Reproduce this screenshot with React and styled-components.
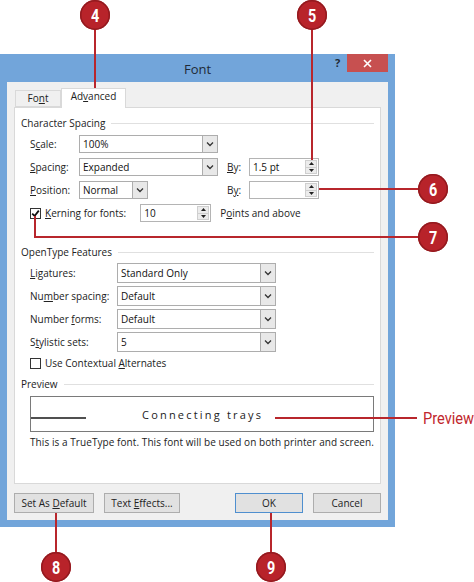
import { Fragment } from "react";
import styled, { createGlobalStyle } from "styled-components";

const GlobalStyle = createGlobalStyle`
  html, body {
    margin: 0;
    background: #fff;
  }
  body {
    font-family: "Open Sans", "Noto Sans", sans-serif;
    color: #1e1e1e;
  }
  * {
    box-sizing: border-box;
  }
`;

const Page = styled.div`
  position: relative;
  width: 474px;
  height: 582px;
  padding-top: 54px;
  overflow: hidden;
`;

const Window = styled.div`
  width: 395px;
  background: #72a5da;
  padding: 0 7px 7px;
`;

const TitleBar = styled.div`
  display: grid;
  grid-template-columns: 60px 1fr 60px;
  height: 28px;
`;

const Title = styled.div`
  grid-column: 2;
  align-self: center;
  text-align: center;
  font-size: 13px;
  color: #1f2a36;
  padding-top: 1px;
`;

const Controls = styled.div`
  grid-column: 3;
  display: flex;
  align-items: flex-start;
  justify-content: flex-end;
`;

const Help = styled.div`
  width: 19px;
  height: 18px;
  line-height: 18px;
  font-size: 11px;
  font-weight: 700;
  color: #1f2a36;
  text-align: center;
`;

const Close = styled.div`
  display: flex;
  align-items: center;
  justify-content: center;
  width: 41px;
  height: 18px;
  background: #c75050;
`;

const Body = styled.div`
  background: #f0f0f0;
  padding: 6px 7px 7px;
`;

const TabStrip = styled.div`
  display: flex;
  align-items: flex-end;
  height: 19px;
  padding-left: 1px;
`;

const Tab = styled.div`
  position: relative;
  height: ${(p) => (p.$active ? "20px" : "17px")};
  width: ${(p) => p.$width}px;
  margin-bottom: ${(p) => (p.$active ? "-1px" : "0")};
  border: 1px solid #d9d9d9;
  border-bottom: ${(p) => (p.$active ? "none" : "1px solid #d9d9d9")};
  background: ${(p) => (p.$active ? "#fff" : "#f0f0f0")};
  font-size: 10px;
  line-height: 15px;
  text-align: center;
  color: #222;
  z-index: ${(p) => (p.$active ? 1 : 0)};
`;

const TabPage = styled.div`
  height: 377px;
  border: 1px solid #d9d9d9;
  background: #fff;
  padding: 8px 6px 0;
`;

const Heading = styled.div`
  display: flex;
  align-items: center;
  gap: 6px;
  height: 14px;
  margin-top: ${(p) => p.$top || 0}px;
  font-size: 10px;
  color: #222;

  &::after {
    content: "";
    flex: 1;
    height: 1px;
    background: #e0e0e0;
  }
`;

const Group = styled.div`
  padding-left: 9px;
  margin-top: ${(p) => p.$top || 0}px;
`;

const SpacingGrid = styled.div`
  display: grid;
  grid-template-columns: 49px 148px 22px 70px;
  grid-auto-rows: 18px;
  row-gap: 5px;
  align-items: center;
`;

const FeatureGrid = styled.div`
  display: grid;
  grid-template-columns: 87px 159px;
  grid-auto-rows: 20px;
  row-gap: 3px;
  align-items: center;
`;

const Label = styled.div`
  font-size: 10px;
  color: #222;
  white-space: nowrap;
`;

const Key = styled.span`
  text-decoration: underline;
  text-underline-offset: 1px;
`;

const Combo = styled.div`
  display: flex;
  width: ${(p) => p.$width}px;
  height: 100%;
  border: 1px solid #adadad;
  background: #fff;
  justify-self: start;
`;

const ComboText = styled.div`
  flex: 1;
  padding-left: 3px;
  font-size: 10px;
  line-height: ${(p) => p.$line || 16}px;
  color: #111;
  white-space: nowrap;
`;

const DropButton = styled.div`
  display: flex;
  align-items: center;
  justify-content: center;
  width: 15px;
  border-left: 1px solid #adadad;
  background: #e8e8e8;
`;

const Spinner = styled.div`
  display: flex;
  width: ${(p) => p.$width}px;
  height: ${(p) => p.$height || 18}px;
  border: 1px solid #b4b4b4;
  background: #fff;
`;

const SpinText = styled.div`
  flex: 1;
  padding-left: 3px;
  font-size: 10px;
  line-height: 16px;
  color: #111;
`;

const SpinButtons = styled.div`
  display: flex;
  flex-direction: column;
  width: 12px;
  margin: 1px 1px 1px 0;
  background: #ececec;
  border: 1px solid #cfcfcf;
`;

const SpinHalf = styled.div`
  flex: 1;
  display: flex;
  align-items: center;
  justify-content: center;

  & + & {
    border-top: 1px solid #cfcfcf;
  }
`;

const CheckRow = styled.div`
  display: flex;
  align-items: center;
  height: ${(p) => p.$height || 14}px;
  margin-top: ${(p) => p.$top || 0}px;
`;

const Box = styled.div`
  display: flex;
  align-items: center;
  justify-content: center;
  width: 11px;
  height: 11px;
  margin-right: 4px;
  border: 1px solid #333;
  background: #fff;
`;

const Suffix = styled.div`
  margin-left: ${(p) => p.$gap}px;
  font-size: 10px;
  color: #222;
`;

const PreviewBox = styled.div`
  display: flex;
  align-items: center;
  height: 36px;
  margin-top: 5px;
  border: 1px solid #7a7a7a;
`;

const Rule = styled.div`
  width: 55px;
  height: 2px;
  margin-top: 8px;
  background: #505050;
`;

const Sample = styled.div`
  margin-left: 56px;
  font-size: 11px;
  letter-spacing: 2.2px;
  color: #222;
`;

const Note = styled.div`
  margin-top: 3px;
  font-size: 10px;
  line-height: 14px;
  letter-spacing: 0.07px;
  color: #222;
  white-space: nowrap;
`;

const Footer = styled.div`
  display: flex;
  gap: 10px;
  margin-top: 9px;
`;

const Button = styled.div`
  width: ${(p) => p.$width}px;
  height: 20px;
  margin-left: ${(p) => (p.$push ? "auto" : "0")};
  border: 1px solid ${(p) => (p.$primary ? "#4f8fcf" : "#adadad")};
  background: #e1e1e1;
  font-size: 10px;
  line-height: 18px;
  text-align: center;
  color: #222;
`;

const Leaders = styled.svg`
  position: absolute;
  inset: 0;
  pointer-events: none;
`;

const Badge = styled.div`
  position: absolute;
  left: ${(p) => p.$x - 15}px;
  top: ${(p) => p.$y - 15}px;
  display: flex;
  align-items: center;
  justify-content: center;
  width: 30px;
  height: 30px;
  border-radius: 50%;
  background: #b8232a;
  box-shadow: inset 0 0 0 1.5px #931a1f;
  color: #fff;
  font-family: Roboto, "Liberation Sans", sans-serif;
  font-weight: 700;
  font-size: 18px;

  span {
    display: inline-block;
    transform: scaleX(0.8);
  }
`;

const CalloutText = styled.div`
  position: absolute;
  left: 423px;
  top: 407px;
  font-family: Roboto, "Liberation Sans", sans-serif;
  font-size: 17px;
  line-height: 22px;
  color: #c1272d;
  transform: scaleX(0.86);
  transform-origin: left center;
`;

function Chevron() {
  return (
    <svg width="8" height="6" viewBox="0 0 8 6">
      <path d="M1 1.5 L4 4.5 L7 1.5" fill="none" stroke="#333" strokeWidth="1.3" />
    </svg>
  );
}

function Arrow({ up }) {
  return (
    <svg width="5" height="3" viewBox="0 0 5 3">
      <path d={up ? "M0 3 L2.5 0 L5 3 Z" : "M0 0 L2.5 3 L5 0 Z"} fill="#222" />
    </svg>
  );
}

function Select({ width, value, line }) {
  return (
    <Combo $width={width}>
      <ComboText $line={line}>{value}</ComboText>
      <DropButton>
        <Chevron />
      </DropButton>
    </Combo>
  );
}

function NumberBox({ width, value, height }) {
  return (
    <Spinner $width={width} $height={height}>
      <SpinText>{value}</SpinText>
      <SpinButtons>
        <SpinHalf>
          <Arrow up />
        </SpinHalf>
        <SpinHalf>
          <Arrow />
        </SpinHalf>
      </SpinButtons>
    </Spinner>
  );
}

// label split as [before, access key, after]
const features = [
  { label: ["", "L", "igatures:"], value: "Standard Only" },
  { label: ["Nu", "m", "ber spacing:"], value: "Default" },
  { label: ["Number ", "f", "orms:"], value: "Default" },
  { label: ["S", "t", "ylistic sets:"], value: "5" },
];

const badges = [
  { n: 4, x: 95, y: 15 },
  { n: 5, x: 312, y: 15 },
  { n: 6, x: 433, y: 189 },
  { n: 7, x: 433, y: 237 },
  { n: 8, x: 56, y: 567 },
  { n: 9, x: 271, y: 567 },
];

export default function App() {
  return (
    <>
      <GlobalStyle />
      <Page>
        <Window>
          <TitleBar>
            <Title>Font</Title>
            <Controls>
              <Help>?</Help>
              <Close>
                <svg width="9" height="9" viewBox="0 0 9 9">
                  <path d="M1 1 L8 8 M8 1 L1 8" stroke="#fff" strokeWidth="1.6" />
                </svg>
              </Close>
            </Controls>
          </TitleBar>

          <Body>
            <TabStrip>
              <Tab $width={46}>
                Fo<Key>n</Key>t
              </Tab>
              <Tab $width={65} $active>
                Ad<Key>v</Key>anced
              </Tab>
            </TabStrip>

            <TabPage>
              <Heading>Character Spacing</Heading>
              <Group $top={5}>
                <SpacingGrid>
                  <Label>
                    S<Key>c</Key>ale:
                  </Label>
                  <Select width={139} value="100%" />
                  <span />
                  <span />

                  <Label>
                    <Key>S</Key>pacing:
                  </Label>
                  <Select width={139} value="Expanded" />
                  <Label>
                    <Key>B</Key>y:
                  </Label>
                  <NumberBox width={70} value="1.5 pt" />

                  <Label>
                    <Key>P</Key>osition:
                  </Label>
                  <Select width={69} value="Normal" />
                  <Label>
                    B<Key>y</Key>:
                  </Label>
                  <NumberBox width={70} value="" />
                </SpacingGrid>

                <CheckRow $height={18} $top={5}>
                  <Box>
                    <svg width="9" height="9" viewBox="0 0 9 9">
                      <path d="M1.2 4.6 L3.6 7 L7.8 1.6" fill="none" stroke="#111" strokeWidth="1.8" />
                    </svg>
                  </Box>
                  <Label>
                    <Key>K</Key>erning for fonts:
                  </Label>
                  <Suffix $gap={14} />
                  <NumberBox width={71} value="10" />
                  <Suffix $gap={9}>
                    P<Key>o</Key>ints and above
                  </Suffix>
                </CheckRow>
              </Group>

              <Heading $top={23}>OpenType Features</Heading>
              <Group $top={4}>
                <FeatureGrid>
                  {features.map(({ label, value }) => (
                    <Fragment key={label.join("")}>
                      <Label>
                        {label[0]}
                        <Key>{label[1]}</Key>
                        {label[2]}
                      </Label>
                      <Select width={159} value={value} line={18} />
                    </Fragment>
                  ))}
                </FeatureGrid>
                <CheckRow $top={4}>
                  <Box />
                  <Label>
                    Use Contextual <Key>A</Key>lternates
                  </Label>
                </CheckRow>
              </Group>

              <Heading $top={7}>Preview</Heading>
              <Group>
                <PreviewBox>
                  <Rule />
                  <Sample>Connecting trays</Sample>
                </PreviewBox>
                <Note>This is a TrueType font. This font will be used on both printer and screen.</Note>
              </Group>
            </TabPage>

            <Footer>
              <Button $width={80}>
                Set As <Key>D</Key>efault
              </Button>
              <Button $width={76}>
                Text <Key>E</Key>ffects...
              </Button>
              <Button $width={68} $push $primary>
                OK
              </Button>
              <Button $width={68}>Cancel</Button>
            </Footer>
          </Body>
        </Window>

        <Leaders width="474" height="582" viewBox="0 0 474 582">
          <g stroke="#b8262c" strokeWidth="2" fill="none">
            <path d="M95 29 V92" />
            <path d="M312 29 V160" />
            <path d="M319 189 H419" />
            <path d="M35 216 V237 H419" />
            <path d="M275 418 H417" />
            <path d="M56 513 V552" />
            <path d="M271 513 V552" />
          </g>
        </Leaders>

        {badges.map((b) => (
          <Badge key={b.n} $x={b.x} $y={b.y}>
            <span>{b.n}</span>
          </Badge>
        ))}
        <CalloutText>Preview</CalloutText>
      </Page>
    </>
  );
}
